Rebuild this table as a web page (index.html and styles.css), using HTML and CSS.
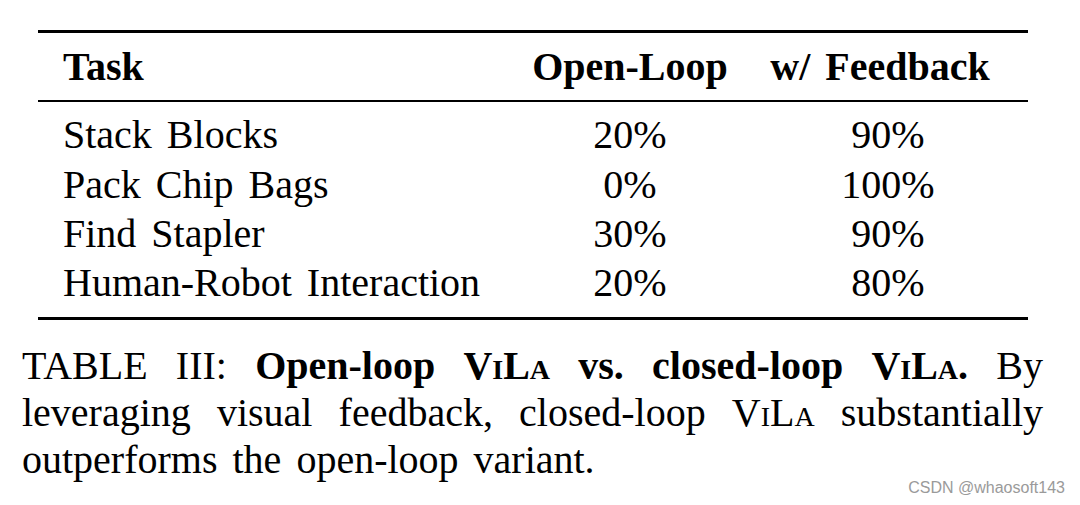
FILE: index.html
```html
<!DOCTYPE html>
<html lang="en">
<head>
<meta charset="utf-8">
<title>Table III</title>
<link rel="stylesheet" href="styles.css">
</head>
<body>
<div class="page">
  <table class="results">
    <colgroup>
      <col class="c-task">
      <col class="c-open">
      <col class="c-fb">
    </colgroup>
    <thead>
      <tr>
        <th class="task">Task</th>
        <th class="num">Open-Loop</th>
        <th class="num fb-head">w/ Feedback</th>
      </tr>
    </thead>
    <tbody>
      <tr><td class="task">Stack Blocks</td><td class="num">20%</td><td class="num fb">90%</td></tr>
      <tr><td class="task">Pack Chip Bags</td><td class="num">0%</td><td class="num fb">100%</td></tr>
      <tr><td class="task">Find Stapler</td><td class="num">30%</td><td class="num fb">90%</td></tr>
      <tr><td class="task">Human-Robot Interaction</td><td class="num">20%</td><td class="num fb">80%</td></tr>
    </tbody>
  </table>
  <p class="caption">TABLE III: <b>Open-loop <span class="sc">ViLa</span> vs. closed-loop <span class="sc">ViLa</span>.</b> By leveraging visual feedback, closed-loop <span class="sc">ViLa</span> substantially outperforms the open-loop variant.</p>
  <div class="watermark">CSDN @whaosoft143</div>
</div>
</body>
</html>
```
FILE: styles.css
```css
html, body {
  margin: 0;
  padding: 0;
  background: #ffffff;
}

.page {
  position: relative;
  width: 1080px;
  height: 505px;
  padding-top: 30px;
  box-sizing: border-box;
  font-family: "Liberation Serif", "Times New Roman", serif;
  color: #000000;
}

.results {
  margin-left: 38px;
  width: 990px;
  table-layout: fixed;
  border-collapse: collapse;
  border-top: 3px solid #000;
  border-bottom: 3px solid #000;
  font-size: 40px;
  word-spacing: 5px;
}

.c-task { width: 492px; }
.c-open { width: 200px; }
.c-fb { width: 298px; }

.results th,
.results td {
  padding: 0;
  line-height: 49.3px;
  white-space: nowrap;
}

.results thead tr {
  border-bottom: 2px solid #000;
}

.results th {
  font-weight: bold;
  padding-top: 9px;
  padding-bottom: 9px;
}

.results .task {
  text-align: left;
  padding-left: 25px;
}

.results .num {
  text-align: center;
}

.results .fb {
  padding-left: 18px;
}

.results .fb-head {
  padding-left: 2px;
}

.results tbody tr:first-child td {
  padding-top: 8px;
}

.results tbody tr:last-child td {
  padding-bottom: 10px;
}

.caption {
  margin: 22px 0 0 22px;
  width: 1021px;
  font-size: 40px;
  line-height: 47px;
  text-align: justify;
  word-spacing: 5px;
}

.caption b {
  font-weight: bold;
}

.sc {
  font-variant: small-caps;
}

.watermark {
  position: absolute;
  right: 15px;
  bottom: 8px;
  font-family: "Liberation Sans", Arial, sans-serif;
  font-size: 16px;
  line-height: 18px;
  color: #9a9a9a;
}
```
